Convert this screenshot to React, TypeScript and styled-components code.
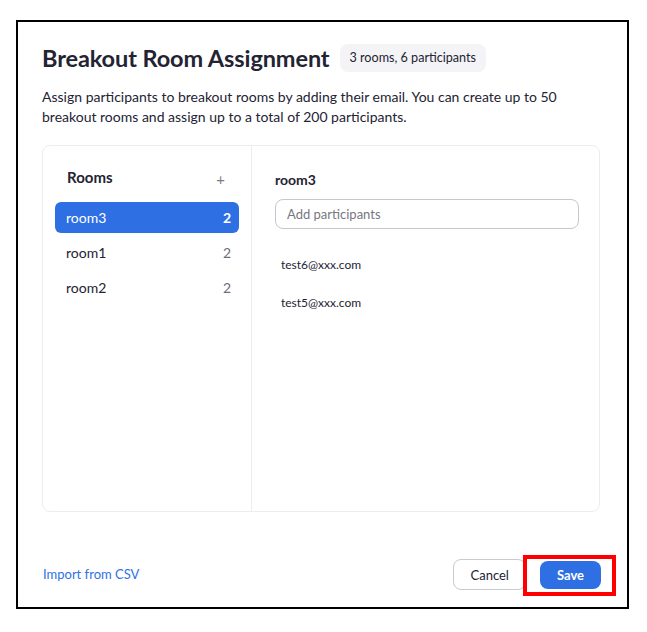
import React, { useState } from 'react';
import styled, { createGlobalStyle } from 'styled-components';

const GlobalStyle = createGlobalStyle`
  html, body {
    margin: 0;
    padding: 0;
    background: #ffffff;
  }
  body {
    font-family: Lato, "Open Sans", "Liberation Sans", sans-serif;
    color: #232333;
  }
  * {
    box-sizing: border-box;
  }
`;

// 캡처 프레임 (검은 테두리)
const Frame = styled.div`
  margin: 20px 0 0 16px;
  width: 613px;
  height: 589px;
  border: 2px solid #000;
  padding: 21px 27px 0 24px;
  display: flex;
  flex-direction: column;
  position: relative;
`;

const HeaderRow = styled.div`
  display: flex;
  align-items: center;
  gap: 10px;
  height: 29px;
`;

const Title = styled.h1`
  margin: 0;
  font-size: 23.5px;
  font-weight: 700;
  color: #232333;
  letter-spacing: -0.1px;
`;

const Badge = styled.span`
  display: inline-flex;
  align-items: center;
  height: 28px;
  padding: 0 10px;
  border-radius: 8px;
  background: #f4f4f6;
  font-size: 12.6px;
  color: #232333;
`;

const Description = styled.p`
  margin: 15px 0 0 0;
  font-size: 14px;
  line-height: 19.5px;
  color: #232333;
`;

const Panel = styled.div`
  margin-top: 19px;
  height: 367px;
  border: 1px solid #ededf1;
  border-radius: 8px;
  display: grid;
  grid-template-columns: 209px 1fr;
`;

const RoomColumn = styled.div`
  border-right: 1px solid #ededf1;
  padding: 21px 12px 0 12px;
  display: flex;
  flex-direction: column;
`;

const RoomHeader = styled.div`
  display: flex;
  align-items: center;
  justify-content: space-between;
  padding: 0 14px 0 12px;
  height: 20px;
  margin-bottom: 15px;
`;

const RoomHeaderTitle = styled.span`
  font-size: 15px;
  font-weight: 700;
  color: #232333;
`;

const AddButton = styled.span`
  font-size: 15px;
  font-weight: 400;
  color: #7c7c86;
  cursor: pointer;
  line-height: 1;
  margin-top: 4px;
`;

const RoomList = styled.div`
  display: flex;
  flex-direction: column;
  gap: 4px;
`;

const RoomRow = styled.div<{ active?: boolean }>`
  height: 31px;
  border-radius: 6px;
  display: flex;
  align-items: center;
  justify-content: space-between;
  padding: 0 8px 0 11px;
  font-size: 14px;
  cursor: pointer;
  background: ${props => props.active ? '#2e6fe3' : 'transparent'};
  color: ${props => props.active ? '#ffffff' : '#232333'};
`;

const RoomCount = styled.span<{ active?: boolean }>`
  font-size: 14px;
  font-weight: ${props => props.active ? 700 : 400};
  color: ${props => props.active ? '#ffffff' : '#6e6e7a'};
`;

const DetailColumn = styled.div`
  padding: 25px 20px 0 23px;
  display: flex;
  flex-direction: column;
`;

const DetailTitle = styled.div`
  font-size: 14px;
  font-weight: 700;
  color: #232333;
  height: 18px;
  line-height: 18px;
  margin-bottom: 10px;
`;

const ParticipantInput = styled.input`
  height: 30px;
  width: 100%;
  border: 1px solid #c6c6cf;
  border-radius: 8px;
  padding: 0 11px;
  font-family: inherit;
  font-size: 13px;
  color: #232333;
  outline: none;

  &::placeholder {
    color: #777782;
  }
`;

const EmailList = styled.div`
  display: flex;
  flex-direction: column;
  gap: 22px;
  margin-top: 28px;
  padding-left: 6px;
`;

const Email = styled.div`
  font-size: 12px;
  line-height: 16px;
  color: #232333;
`;

const Footer = styled.div`
  margin-top: auto;
  margin-bottom: 17px;
  display: flex;
  align-items: center;
  justify-content: space-between;
`;

const ImportLink = styled.a`
  font-size: 13px;
  color: #2f72e4;
  cursor: pointer;
  padding-left: 1px;
  margin-top: -2px;
`;

const ButtonGroup = styled.div`
  display: flex;
  align-items: center;
  gap: 14px;
  position: relative;
  margin-right: -1px;
`;

const Button = styled.button<{ primary?: boolean }>`
  height: ${props => props.primary ? '28px' : '31px'};
  padding: 0 ${props => props.primary ? '17px' : '16px'};
  border-radius: 8px;
  font-family: inherit;
  font-size: 13px;
  cursor: pointer;
  border: ${props => props.primary ? 'none' : '1px solid #c9c9d2'};
  background: ${props => props.primary ? '#2e6fe3' : '#ffffff'};
  color: ${props => props.primary ? '#ffffff' : '#232333'};
  font-weight: ${props => props.primary ? 700 : 400};
`;

// 강조 표시 (빨간 사각형)
const Highlight = styled.div`
  position: absolute;
  right: -15px;
  top: -4px;
  width: 93px;
  height: 41px;
  border: 4px solid #ff0000;
  pointer-events: none;
`;

const rooms = [
  { name: 'room3', count: 2 },
  { name: 'room1', count: 2 },
  { name: 'room2', count: 2 },
];

const participants = ['test6@xxx.com', 'test5@xxx.com'];

const App: React.FC = () => {
  const [selected, setSelected] = useState('room3');

  return (
    <>
      <GlobalStyle />
      <Frame>
        <HeaderRow>
          <Title>Breakout Room Assignment</Title>
          <Badge>3 rooms, 6 participants</Badge>
        </HeaderRow>
        <Description>
          Assign participants to breakout rooms by adding their email. You can create up to 50
          breakout rooms and assign up to a total of 200 participants.
        </Description>

        <Panel>
          <RoomColumn>
            <RoomHeader>
              <RoomHeaderTitle>Rooms</RoomHeaderTitle>
              <AddButton>+</AddButton>
            </RoomHeader>
            <RoomList>
              {rooms.map(room => (
                <RoomRow
                  key={room.name}
                  active={room.name === selected}
                  onClick={() => setSelected(room.name)}
                >
                  <span>{room.name}</span>
                  <RoomCount active={room.name === selected}>{room.count}</RoomCount>
                </RoomRow>
              ))}
            </RoomList>
          </RoomColumn>

          <DetailColumn>
            <DetailTitle>{selected}</DetailTitle>
            <ParticipantInput placeholder="Add participants" />
            <EmailList>
              {participants.map(email => (
                <Email key={email}>{email}</Email>
              ))}
            </EmailList>
          </DetailColumn>
        </Panel>

        <Footer>
          <ImportLink>Import from CSV</ImportLink>
          <ButtonGroup>
            <Button>Cancel</Button>
            <Button primary>Save</Button>
            <Highlight />
          </ButtonGroup>
        </Footer>
      </Frame>
    </>
  );
};

export default App;
